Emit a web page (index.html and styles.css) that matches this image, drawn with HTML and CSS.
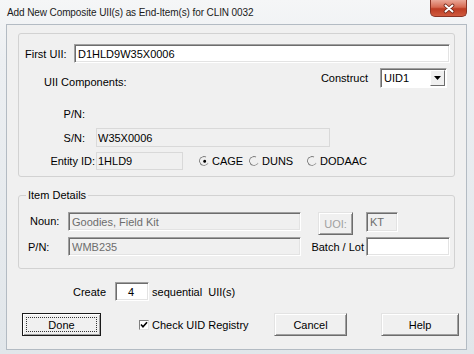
FILE: index.html
```html
<!DOCTYPE html>
<html lang="en">
<head>
  <meta charset="UTF-8" />
  <title>Add New Composite UII(s)</title>
  <link rel="stylesheet" href="styles.css">
</head>
<body>

  <div class="window">
    <div class="titlebar">
      <span class="title">Add New Composite UII(s) as End-Item(s) for CLIN 0032</span>
      <button class="close">
        <svg width="14" height="11" viewBox="0 0 14 11">
          <path d="M3.5 2.5 L10.5 8.5 M10.5 2.5 L3.5 8.5" stroke="#6e2416" stroke-width="3.6" stroke-linecap="round" fill="none"/>
          <path d="M3.5 2.5 L10.5 8.5 M10.5 2.5 L3.5 8.5" stroke="#fff" stroke-width="2" stroke-linecap="round" fill="none"/>
        </svg>
      </button>
    </div>

    <div class="client">
      <div class="group uii">
        <div class="row first">
          <label class="lbl-first">First UII:</label>
          <input class="tb sunken" type="text" value="D1HLD9W35X0006" readonly />
        </div>

        <div class="row construct-row">
          <span class="components">UII Components:</span>
          <label class="construct">Construct</label>
          <div class="combo">
            <span class="combo-text">UID1</span>
            <span class="drop">
              <svg width="7" height="4" viewBox="0 0 7 4"><path d="M0 0 H7 L3.5 4 Z" fill="#000"/></svg>
            </span>
          </div>
        </div>

        <div class="row pn-row">
          <label class="lbl-comp">P/N:</label>
        </div>

        <div class="row sn-row">
          <label class="lbl-comp">S/N:</label>
          <input class="tb flat sn" type="text" value="W35X0006" readonly />
        </div>

        <div class="row entity-row">
          <label class="lbl-entity">Entity ID:</label>
          <input class="tb flat entity" type="text" value="1HLD9" readonly />
          <div class="radios">
            <label class="opt opt-cage"><span class="radio checked"></span>CAGE</label>
            <label class="opt opt-duns"><span class="radio"></span>DUNS</label>
            <label class="opt"><span class="radio"></span>DODAAC</label>
          </div>
        </div>
      </div>

      <fieldset class="group details">
        <legend>Item Details</legend>
        <div class="row noun-row">
          <label class="lbl-noun">Noun:</label>
          <input class="tb sunken disabled noun" type="text" value="Goodies, Field Kit" readonly />
          <button class="btn uoi" disabled>UOI:</button>
          <input class="tb sunken disabled kt" type="text" value="KT" readonly />
        </div>
        <div class="row item-pn-row">
          <label class="lbl-pn">P/N:</label>
          <input class="tb sunken disabled noun" type="text" value="WMB235" readonly />
          <label class="batch">Batch / Lot</label>
          <input class="tb sunken lot" type="text" value="" readonly />
        </div>
      </fieldset>

      <div class="row create-row">
        <label class="create">Create</label>
        <input class="tb sunken count" type="text" value="4" readonly />
        <span class="seq">sequential&nbsp; UII(s)</span>
      </div>

      <div class="row button-row">
        <button class="btn done">Done</button>
        <label class="check">
          <span class="box">
            <svg width="8" height="8" viewBox="0 0 8 8"><path d="M1 3.5 L3 5.8 L7 1.2" stroke="#000" stroke-width="1.6" fill="none"/></svg>
          </span>
          Check UID Registry
        </label>
        <button class="btn cancel">Cancel</button>
        <button class="btn help">Help</button>
      </div>
    </div>
  </div>

</body>
</html>
```

FILE: styles.css
```css
* {
  box-sizing: border-box;
}

body {
  margin: 0;
  width: 474px;
  height: 354px;
  overflow: hidden;
  font-family: "Liberation Sans", Arial, sans-serif;
  font-size: 11px;
  color: #000;
  background: #e6eaee;
}

.window {
  height: 354px;
  display: flex;
  flex-direction: column;
  background: linear-gradient(#f5f6f7, #eceff2 60px, #e1e6ea);
}

.titlebar {
  height: 24px;
  display: flex;
  align-items: flex-start;
}

.title {
  font-size: 10px;
  letter-spacing: -0.1px;
  line-height: 25px;
  padding-left: 7px;
  color: #1a1a1a;
}

.close {
  margin-left: auto;
  margin-right: 7px;
  width: 37px;
  height: 17px;
  padding: 0;
  border: 1px solid #8a3324;
  border-top: none;
  border-radius: 0 0 5px 5px;
  background: linear-gradient(#eaa898, #d66a52 45%, #bd3c23 55%, #cf5a3e);
  display: flex;
  align-items: center;
  justify-content: center;
}

.client {
  margin: 0 7px 0 6px;
  height: 326px;
  background: #f0f0f0;
  border: 1px solid #b3bbc3;
  padding: 8px 11px 0;
}

.row {
  display: flex;
  align-items: center;
}

.group {
  border: 1px solid #d2d2d2;
  border-radius: 3px;
}

/* text boxes */
.tb {
  font-family: inherit;
  font-size: 11px;
  color: #000;
  margin: 0;
  padding: 0 0 0 3px;
  outline: none;
}

.sunken {
  background: #fff;
  border: 1px solid;
  border-color: #a0a0a0 #fff #fff #a0a0a0;
  box-shadow: inset 1px 1px #6d6d6d, inset -1px -1px #e3e3e3;
}

.sunken.disabled {
  background: #f0f0f0;
  color: #6d6d6d;
}

.flat {
  background: #f0f0f0;
  border: 1px solid #d9d9d9;
  padding-left: 1px;
}

/* UII group */
.uii {
  height: 144px;
  padding-right: 4px;
}

.first {
  margin-top: 10px;
  height: 19px;
}

.lbl-first {
  width: 55px;
  padding-left: 6px;
}

.first .tb {
  flex: 1;
  height: 19px;
}

.construct-row {
  margin-top: 5px;
  height: 20px;
}

.components {
  align-self: flex-end;
  padding-left: 25px;
  line-height: 13px;
  margin-bottom: -1px;
}

.construct {
  margin-left: auto;
  margin-right: 12px;
}

.combo {
  width: 67px;
  height: 20px;
  margin-right: 3px;
  display: flex;
  background: #fff;
  border: 1px solid;
  border-color: #a0a0a0 #fff #fff #a0a0a0;
  box-shadow: inset 1px 1px #6d6d6d;
}

.combo-text {
  flex: 1;
  padding: 3px 0 0 3px;
}

.drop {
  width: 15px;
  margin: 1px 1px 1px 0;
  background: #f0f0f0;
  border: 1px solid;
  border-color: #fff #6d6d6d #6d6d6d #fff;
  display: flex;
  align-items: center;
  justify-content: center;
}

.pn-row {
  margin-top: 16px;
  height: 19px;
}

.lbl-comp {
  width: 66px;
  text-align: right;
}

.sn-row {
  margin-top: 5px;
  height: 19px;
}

.sn {
  margin-left: 11px;
  width: 234px;
  height: 19px;
}

.entity-row {
  margin-top: 5px;
  height: 18px;
}

.lbl-entity {
  width: 76px;
  text-align: right;
}

.entity {
  margin-left: 1px;
  width: 87px;
  height: 18px;
}

.radios {
  display: flex;
  margin-left: 16px;
}

.opt {
  display: flex;
  align-items: center;
  gap: 3px;
}

.opt-cage {
  width: 50px;
}

.opt-duns {
  width: 58px;
}

.radio {
  width: 10px;
  height: 10px;
  border-radius: 50%;
  border: 1px solid;
  border-color: #7c7c7c transparent #9a9a9a #7c7c7c;
  transform: rotate(-20deg);
  display: flex;
  align-items: center;
  justify-content: center;
}

.radio.checked::after {
  content: "";
  width: 3px;
  height: 3px;
  border-radius: 50%;
  background: #000;
}

/* Item details group */
.details {
  margin: 12px 0 0;
  min-width: 0;
  padding: 10px 4px 12px 0;
}

.details legend {
  margin-left: 7px;
  padding: 0 2px;
  line-height: 13px;
}

.noun-row {
  height: 21px;
  align-items: flex-start;
}

.lbl-noun {
  width: 49px;
  padding-left: 11px;
  line-height: 19px;
}

.noun {
  width: 233px;
  height: 19px;
}

.uoi {
  margin-left: 17px;
  width: 35px;
  height: 21px;
}

.kt {
  margin-left: 13px;
  width: 32px;
  height: 20px;
}

.item-pn-row {
  margin-top: 4px;
  height: 19px;
}

.lbl-pn {
  width: 49px;
  padding-left: 9px;
}

.batch {
  margin-left: auto;
  margin-right: 2px;
}

.lot {
  width: 84px;
  height: 19px;
}

/* bottom */
.create-row {
  margin-top: 13px;
  height: 19px;
}

.create {
  margin-left: 55px;
}

.count {
  margin-left: 9px;
  width: 34px;
  height: 19px;
  text-align: center;
  padding: 0 2px 0 0;
}

.seq {
  margin-left: 3px;
}

.button-row {
  margin-top: 12px;
  margin-right: -4px;
  height: 23px;
}

.btn {
  font-family: inherit;
  font-size: 11px;
  color: #000;
  height: 23px;
  padding: 0;
  background: #f0f0f0;
  border: 1px solid;
  border-color: #e3e3e3 #6d6d6d #6d6d6d #e3e3e3;
  box-shadow: inset 1px 1px #fff, inset -1px -1px #a0a0a0;
}

.btn:disabled {
  color: #a0a0a0;
}

.done {
  margin-left: 4px;
  width: 79px;
  border-color: #1a1a1a;
  outline: 1px dotted #333;
  outline-offset: -5px;
}

.check {
  margin-left: 38px;
  display: flex;
  align-items: center;
  gap: 3px;
}

.box {
  width: 10px;
  height: 10px;
  background: #fff;
  border: 1px solid;
  border-color: #808080 #e3e3e3 #e3e3e3 #808080;
  display: flex;
  align-items: center;
  justify-content: center;
}

.cancel {
  margin-left: auto;
  width: 73px;
}

.help {
  margin-left: 34px;
  width: 78px;
}
```
